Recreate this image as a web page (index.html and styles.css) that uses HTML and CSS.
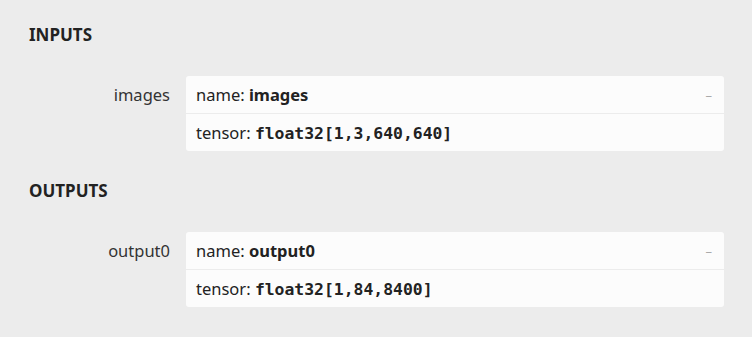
FILE: index.html
```html
<!DOCTYPE html>
<html lang="en">
<head>
  <meta charset="UTF-8" />
  <title>Model Properties</title>
  <link rel="stylesheet" href="styles.css">
</head>
<body>
  <div class="sidebar">
    <!-- Inputs -->
    <div class="section">
      <div class="section-title">INPUTS</div>
      <div class="item">
        <div class="item-label">images</div>
        <div class="item-box">
          <div class="row">
            <span>name: <b>images</b></span>
            <span class="toggle">&ndash;</span>
          </div>
          <div class="row">
            <span>tensor: <code>float32[1,3,640,640]</code></span>
          </div>
        </div>
      </div>
    </div>

    <!-- Outputs -->
    <div class="section">
      <div class="section-title">OUTPUTS</div>
      <div class="item">
        <div class="item-label">output0</div>
        <div class="item-box">
          <div class="row">
            <span>name: <b>output0</b></span>
            <span class="toggle">&ndash;</span>
          </div>
          <div class="row">
            <span>tensor: <code>float32[1,84,8400]</code></span>
          </div>
        </div>
      </div>
    </div>
  </div>
</body>
</html>
```

FILE: styles.css
```css
body {
  font-family: "Noto Sans", "Open Sans", sans-serif;
  margin: 0;
  background: #ececec;
  color: #222;
}
.sidebar {
  padding: 23px 28px 0 0;
}
.section {
  margin-bottom: 28px;
}
.section-title {
  font-size: 17px;
  font-weight: bold;
  line-height: 24px;
  padding-left: 29px;
  margin-bottom: 29px;
}
.item {
  display: flex;
}
.item-label {
  width: 170px;
  text-align: right;
  padding-right: 16px;
  font-size: 16.5px;
  line-height: 37px;
  color: #333;
}
.item-box {
  flex: 1;
  background: #fcfcfc;
  border-radius: 3px;
  font-size: 16.5px;
}
.row {
  display: flex;
  justify-content: space-between;
  align-items: center;
  height: 37px;
  padding: 0 12px 0 10px;
}
.row + .row {
  border-top: 1px solid #ececec;
}
code {
  font-family: "DejaVu Sans Mono", monospace;
  font-weight: bold;
  font-size: 16.4px;
}
.toggle {
  color: #aaa;
  font-size: 13px;
}
```
